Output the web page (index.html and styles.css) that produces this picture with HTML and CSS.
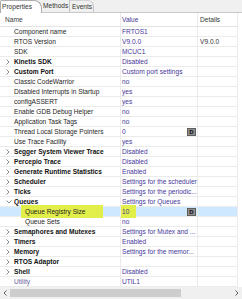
FILE: index.html
```html
<!DOCTYPE html>
<html>
<head>
<meta charset="utf-8">
<link rel="stylesheet" href="styles.css">
</head>
<body>
<div class="view">
  <div class="tabs">
    <div class="tab active">Properties</div>
    <div class="tab methods">Methods</div>
    <div class="tab events">Events</div>
  </div>
  <div class="table">
    <div class="row head"><div class="c name">Name</div><div class="c val">Value</div><div class="c det">Details</div><div class="c end"></div></div>

    <div class="row"><div class="c name"><span class="tw"></span>Component name</div><div class="c val">FRTOS1</div><div class="c det"></div><div class="c end"></div></div>
    <div class="row"><div class="c name"><span class="tw"></span>RTOS Version</div><div class="c val">V9.0.0</div><div class="c det">V9.0.0</div><div class="c end"></div></div>
    <div class="row"><div class="c name"><span class="tw"></span>SDK</div><div class="c val">MCUC1</div><div class="c det"></div><div class="c end"></div></div>
    <div class="row"><div class="c name b"><span class="tw"><svg width="4" height="6" viewBox="0 0 4 6"><polyline points="0.5,0.5 3,3 0.5,5.5"/></svg></span>Kinetis SDK</div><div class="c val">Disabled</div><div class="c det"></div><div class="c end"></div></div>
    <div class="row"><div class="c name b"><span class="tw"><svg width="4" height="6" viewBox="0 0 4 6"><polyline points="0.5,0.5 3,3 0.5,5.5"/></svg></span>Custom Port</div><div class="c val">Custom port settings</div><div class="c det"></div><div class="c end"></div></div>
    <div class="row"><div class="c name"><span class="tw"></span>Classic CodeWarrior</div><div class="c val">no</div><div class="c det"></div><div class="c end"></div></div>
    <div class="row"><div class="c name"><span class="tw"></span>Disabled Interrupts in Startup</div><div class="c val">yes</div><div class="c det"></div><div class="c end"></div></div>
    <div class="row"><div class="c name"><span class="tw"></span>configASSERT</div><div class="c val">yes</div><div class="c det"></div><div class="c end"></div></div>
    <div class="row"><div class="c name"><span class="tw"></span>Enable GDB Debug Helper</div><div class="c val">no</div><div class="c det"></div><div class="c end"></div></div>
    <div class="row"><div class="c name"><span class="tw"></span>Application Task Tags</div><div class="c val">no</div><div class="c det"></div><div class="c end"></div></div>
    <div class="row"><div class="c name"><span class="tw"></span>Thread Local Storage Pointers</div><div class="c val"><span class="vt">0</span><span class="dbtn">D</span></div><div class="c det"></div><div class="c end"></div></div>
    <div class="row"><div class="c name"><span class="tw"></span>Use Trace Facility</div><div class="c val">yes</div><div class="c det"></div><div class="c end"></div></div>
    <div class="row"><div class="c name b"><span class="tw"><svg width="4" height="6" viewBox="0 0 4 6"><polyline points="0.5,0.5 3,3 0.5,5.5"/></svg></span>Segger System Viewer Trace</div><div class="c val">Disabled</div><div class="c det"></div><div class="c end"></div></div>
    <div class="row"><div class="c name b"><span class="tw"><svg width="4" height="6" viewBox="0 0 4 6"><polyline points="0.5,0.5 3,3 0.5,5.5"/></svg></span>Percepio Trace</div><div class="c val">Disabled</div><div class="c det"></div><div class="c end"></div></div>
    <div class="row"><div class="c name b"><span class="tw"><svg width="4" height="6" viewBox="0 0 4 6"><polyline points="0.5,0.5 3,3 0.5,5.5"/></svg></span>Generate Runtime Statistics</div><div class="c val">Enabled</div><div class="c det"></div><div class="c end"></div></div>
    <div class="row"><div class="c name b"><span class="tw"><svg width="4" height="6" viewBox="0 0 4 6"><polyline points="0.5,0.5 3,3 0.5,5.5"/></svg></span>Scheduler</div><div class="c val">Settings for the scheduler</div><div class="c det"></div><div class="c end"></div></div>
    <div class="row"><div class="c name b"><span class="tw"><svg width="4" height="6" viewBox="0 0 4 6"><polyline points="0.5,0.5 3,3 0.5,5.5"/></svg></span>Ticks</div><div class="c val">Settings for the periodic...</div><div class="c det"></div><div class="c end"></div></div>
    <div class="row"><div class="c name b"><span class="tw"><svg width="6" height="4" viewBox="0 0 6 4"><polyline points="0.5,0.5 3,3 5.5,0.5"/></svg></span>Queues</div><div class="c val">Settings for Queues</div><div class="c det"></div><div class="c end"></div></div>
    <div class="row sel"><div class="c name vis"><span class="tw l2"></span><span class="mark mname">Queue Registry Size</span></div><div class="c val vis"><span class="mark mval">10</span><span class="dbtn">D</span></div><div class="c det"></div><div class="c end"></div></div>
    <div class="row"><div class="c name"><span class="tw l2"></span>Queue Sets</div><div class="c val">no</div><div class="c det"></div><div class="c end"></div></div>
    <div class="row"><div class="c name b"><span class="tw"><svg width="4" height="6" viewBox="0 0 4 6"><polyline points="0.5,0.5 3,3 0.5,5.5"/></svg></span>Semaphores and Mutexes</div><div class="c val">Settings for Mutex and ...</div><div class="c det"></div><div class="c end"></div></div>
    <div class="row"><div class="c name b"><span class="tw"><svg width="4" height="6" viewBox="0 0 4 6"><polyline points="0.5,0.5 3,3 0.5,5.5"/></svg></span>Timers</div><div class="c val">Enabled</div><div class="c det"></div><div class="c end"></div></div>
    <div class="row"><div class="c name b"><span class="tw"><svg width="4" height="6" viewBox="0 0 4 6"><polyline points="0.5,0.5 3,3 0.5,5.5"/></svg></span>Memory</div><div class="c val">Settings for the memor...</div><div class="c det"></div><div class="c end"></div></div>
    <div class="row"><div class="c name b"><span class="tw"><svg width="4" height="6" viewBox="0 0 4 6"><polyline points="0.5,0.5 3,3 0.5,5.5"/></svg></span>RTOS Adaptor</div><div class="c val"></div><div class="c det"></div><div class="c end"></div></div>
    <div class="row"><div class="c name b"><span class="tw"><svg width="4" height="6" viewBox="0 0 4 6"><polyline points="0.5,0.5 3,3 0.5,5.5"/></svg></span>Shell</div><div class="c val">Disabled</div><div class="c det"></div><div class="c end"></div></div>
    <div class="row"><div class="c name link"><span class="tw"></span>Utility</div><div class="c val">UTIL1</div><div class="c det"></div><div class="c end"></div></div>
  </div>
  <div class="hscroll">
    <span class="arr"><svg width="4" height="6" viewBox="0 0 4 6"><polyline points="3.5,0.5 1,3 3.5,5.5"/></svg></span>
    <span class="thumb"></span>
    <span class="track"></span>
    <span class="arr"><svg width="4" height="6" viewBox="0 0 4 6"><polyline points="0.5,0.5 3,3 0.5,5.5"/></svg></span>
  </div>
</div>
</body>
</html>
```
FILE: styles.css
```css
* { box-sizing: border-box; margin: 0; padding: 0; }
html, body { width: 242px; height: 299px; overflow: hidden; background: #fff; }
body {
  font-family: "Liberation Sans", Arial, sans-serif;
  font-size: 6.6px;
  color: #1e1e1e;
}
.view { display: flex; flex-direction: column; height: 299px; }

.tabs {
  display: flex;
  align-items: flex-end;
  height: 13px;
  background: #f0f0f0;
  border-bottom: 1px solid #c9c9c9;
  color: #333;
}
.tab {
  height: 12px;
  line-height: 11px;
  padding-left: 2px;
  border-right: 1px solid #c4c4c4;
  white-space: nowrap;
}
.tab.active {
  width: 42px;
  height: 13px;
  margin-bottom: -1px;
  background: #fff;
  border: 1px solid #adadad;
  border-bottom: none;
  border-radius: 2px 8px 0 0;
  padding-left: 1px;
}
.tab.methods { width: 28px; padding-left: 1px; }
.tab.events { width: 24px; border-top-right-radius: 6px; border-top: 1px solid #d4d4d4; }

.table { display: flex; flex-direction: column; height: 274px; }
.row {
  display: grid;
  grid-template-columns: 121px 77px 40px 4px;
  height: 10px;
  line-height: 9px;
}
.c {
  border-right: 1px solid #ebebeb;
  border-bottom: 1px solid #ebebeb;
  white-space: nowrap;
  overflow: hidden;
}
.c.end { border-right: none; border-bottom: none; }
.row.head { height: 14px; line-height: 13px; color: #3a3a3a; }
.row.head .c { border-bottom-color: #e3e3e3; }
.row.head .name { padding-left: 5px; }
.row.head .det { padding-left: 2px; }

.name { display: flex; align-items: center; }
.name.b { font-weight: bold; color: #111; }
.name.link { color: #6c5c9c; }
.tw {
  flex: none;
  width: 14px;
  padding-left: 6px;
  display: flex;
  align-items: center;
  height: 9px;
}
.tw.l2 { width: 25px; }
.tw svg { fill: none; stroke: #8c8c8c; stroke-width: 1; }

.val {
  padding-left: 1px;
  color: #47379a;
  display: flex;
  align-items: center;
}
.vt { flex: 1; }
.det { padding-left: 2px; color: #333; }

.dbtn {
  margin-left: auto;
  margin-right: 1px;
  width: 9px;
  height: 8px;
  background: #8f8f8f;
  border: 1px solid #5e5e5e;
  color: #0a0a0a;
  font-weight: bold;
  font-size: 6px;
  line-height: 6px;
  text-align: center;
}

.row.sel .c { background: #cde8ff; }
.row.sel .c.end { background: #fff; }
.c.vis { overflow: visible; }
.mark {
  display: inline-block;
  background: #e2ef4a;
  line-height: 9px;
  padding-top: 2px;
  padding-bottom: 2px;
  margin-top: -2px;
  margin-bottom: -2px;
}
.mname { padding-left: 4px; margin-left: -4px; padding-right: 18px; margin-right: -18px; }
.mval { padding-left: 1px; margin-left: -1px; width: 15px; }

.hscroll {
  display: flex;
  align-items: center;
  height: 12px;
  background: #f0f0f0;
}
.arr { width: 10px; display: flex; justify-content: center; }
.arr svg { fill: none; stroke: #606060; stroke-width: 1; }
.thumb { width: 171px; height: 8px; background: #cdcdcd; }
.track { flex: 1; }
```
